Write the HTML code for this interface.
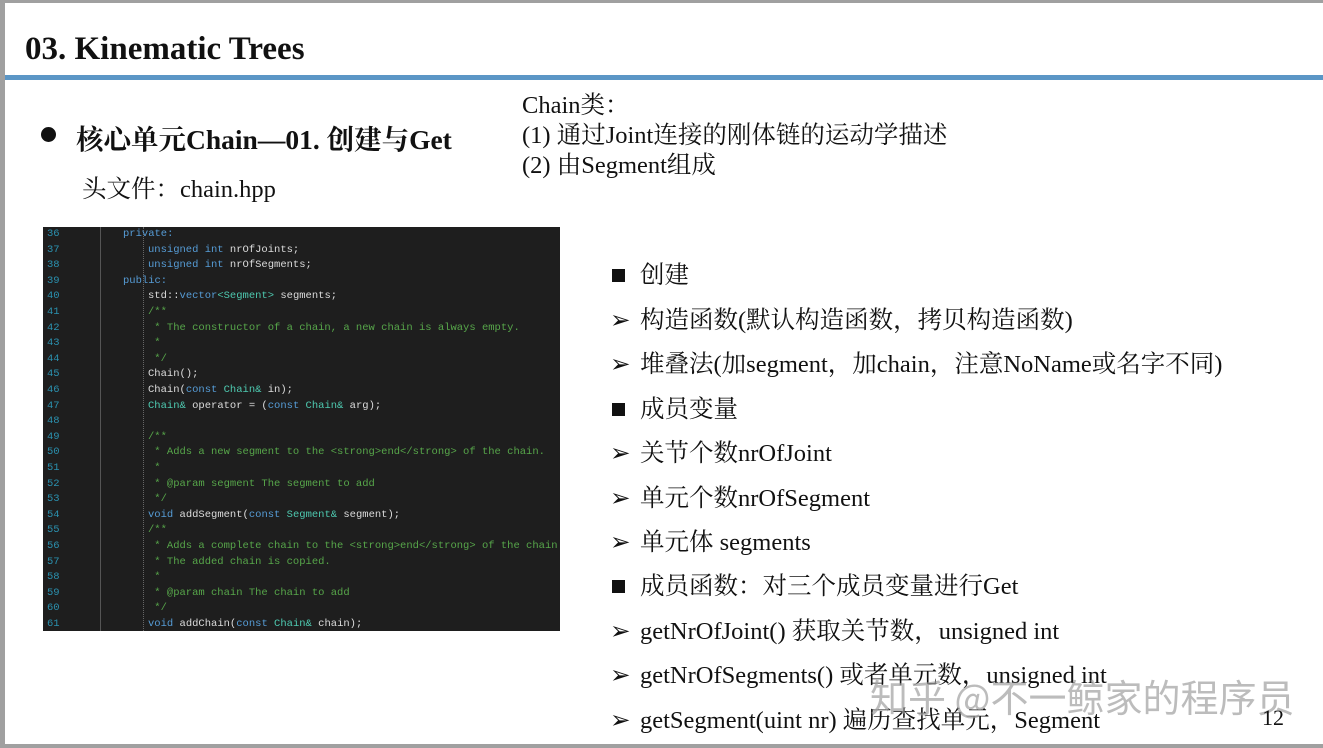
<!DOCTYPE html>
<html><head><meta charset="utf-8"><style>
body{margin:0;width:1323px;height:748px;overflow:hidden;background:#a0a0a0;position:relative;font-family:"Liberation Serif","Noto Serif CJK SC",serif;}
.page{position:absolute;left:5px;top:3px;width:1318px;height:741px;background:#fff;}
.t{position:absolute;white-space:nowrap;color:#111;}
.code{position:absolute;left:43px;top:227px;width:517px;height:404px;background:#1e1e1e;font-family:"Liberation Mono",monospace;font-size:10.5px;overflow:hidden;}
.code div{position:absolute;white-space:pre;height:15.6px;line-height:15.6px;}
.n{color:#2b91af;left:4px}
.k{color:#569cd6}.c{color:#57a64a}.ty{color:#4ec9b0}.w{color:#dcdcdc}
.r{position:absolute;font-size:24.5px;left:610px;white-space:nowrap;color:#111;font-family:"Liberation Serif","Noto Serif CJK SC",serif}
.r b{display:inline-block;width:30px;font-weight:normal}
.sq{display:inline-block;width:13px;height:13px;background:#111;margin:0 15px 3px 2px;vertical-align:middle}
</style></head><body>
<div class="page"></div>
<div class="t" style="left:25px;top:31px;font-size:33px;font-weight:bold">03. Kinematic Trees</div>
<div style="position:absolute;left:5px;top:75px;width:1318px;height:5px;background:#5b96c6"></div>
<div style="position:absolute;left:41px;top:127px;width:15px;height:15px;border-radius:50%;background:#111"></div>
<div class="t" style="left:76px;top:117px;font-size:27.5px;font-weight:bold">核心单元Chain—01. 创建与Get</div>
<div class="t" style="left:82px;top:170px;font-size:24.5px">头文件：chain.hpp</div>
<div class="t" style="left:522px;top:91px;font-size:24.5px;line-height:30px">Chain类：<br>(1) 通过Joint连接的刚体链的运动学描述<br>(2) 由Segment组成</div>
<div class="code">
<div style="left:57px;top:0;height:404px;border-left:1px solid #555"></div>
<div style="left:100px;top:0;height:404px;border-left:1px dotted #666"></div>
<div class="n" style="top:0">36</div><div class="k" style="left:80px;top:0">private:</div>
<div class="n" style="top:15.6px">37</div><div style="left:105px;top:15.6px"><span class="k">unsigned int</span><span class="w"> nrOfJoints;</span></div>
<div class="n" style="top:31.2px">38</div><div style="left:105px;top:31.2px"><span class="k">unsigned int</span><span class="w"> nrOfSegments;</span></div>
<div class="n" style="top:46.8px">39</div><div class="k" style="left:80px;top:46.8px">public:</div>
<div class="n" style="top:62.4px">40</div><div style="left:105px;top:62.4px"><span class="w">std::</span><span class="k">vector</span><span class="ty">&lt;Segment&gt;</span><span class="w"> segments;</span></div>
<div class="n" style="top:78px">41</div><div class="c" style="left:105px;top:78px">/**</div>
<div class="n" style="top:93.6px">42</div><div class="c" style="left:105px;top:93.6px"> * The constructor of a chain, a new chain is always empty.</div>
<div class="n" style="top:109.2px">43</div><div class="c" style="left:105px;top:109.2px"> *</div>
<div class="n" style="top:124.8px">44</div><div class="c" style="left:105px;top:124.8px"> */</div>
<div class="n" style="top:140.4px">45</div><div class="w" style="left:105px;top:140.4px">Chain();</div>
<div class="n" style="top:156px">46</div><div style="left:105px;top:156px"><span class="w">Chain(</span><span class="k">const</span><span class="ty"> Chain&amp;</span><span class="w"> in);</span></div>
<div class="n" style="top:171.6px">47</div><div style="left:105px;top:171.6px"><span class="ty">Chain&amp;</span><span class="w"> operator = (</span><span class="k">const</span><span class="ty"> Chain&amp;</span><span class="w"> arg);</span></div>
<div class="n" style="top:187.2px">48</div>
<div class="n" style="top:202.8px">49</div><div class="c" style="left:105px;top:202.8px">/**</div>
<div class="n" style="top:218.4px">50</div><div class="c" style="left:105px;top:218.4px"> * Adds a new segment to the &lt;strong&gt;end&lt;/strong&gt; of the chain.</div>
<div class="n" style="top:234px">51</div><div class="c" style="left:105px;top:234px"> *</div>
<div class="n" style="top:249.6px">52</div><div class="c" style="left:105px;top:249.6px"> * @param segment The segment to add</div>
<div class="n" style="top:265.2px">53</div><div class="c" style="left:105px;top:265.2px"> */</div>
<div class="n" style="top:280.8px">54</div><div style="left:105px;top:280.8px"><span class="k">void</span><span class="w"> addSegment(</span><span class="k">const</span><span class="ty"> Segment&amp;</span><span class="w"> segment);</span></div>
<div class="n" style="top:296.4px">55</div><div class="c" style="left:105px;top:296.4px">/**</div>
<div class="n" style="top:312px">56</div><div class="c" style="left:105px;top:312px"> * Adds a complete chain to the &lt;strong&gt;end&lt;/strong&gt; of the chain</div>
<div class="n" style="top:327.6px">57</div><div class="c" style="left:105px;top:327.6px"> * The added chain is copied.</div>
<div class="n" style="top:343.2px">58</div><div class="c" style="left:105px;top:343.2px"> *</div>
<div class="n" style="top:358.8px">59</div><div class="c" style="left:105px;top:358.8px"> * @param chain The chain to add</div>
<div class="n" style="top:374.4px">60</div><div class="c" style="left:105px;top:374.4px"> */</div>
<div class="n" style="top:390px">61</div><div style="left:105px;top:390px"><span class="k">void</span><span class="w"> addChain(</span><span class="k">const</span><span class="ty"> Chain&amp;</span><span class="w"> chain);</span></div>
</div>
<div class="r" style="top:256px"><span class="sq"></span>创建</div>
<div class="r" style="top:301px"><b>➢</b>构造函数(默认构造函数，拷贝构造函数)</div>
<div class="r" style="top:345px"><b>➢</b>堆叠法(加segment，加chain，注意NoName或名字不同)</div>
<div class="r" style="top:390px"><span class="sq"></span>成员变量</div>
<div class="r" style="top:434px"><b>➢</b>关节个数nrOfJoint</div>
<div class="r" style="top:479px"><b>➢</b>单元个数nrOfSegment</div>
<div class="r" style="top:523px"><b>➢</b>单元体 segments</div>
<div class="r" style="top:567px"><span class="sq"></span>成员函数：对三个成员变量进行Get</div>
<div class="r" style="top:612px"><b>➢</b>getNrOfJoint() 获取关节数，unsigned int</div>
<div class="r" style="top:656px"><b>➢</b>getNrOfSegments() 或者单元数，unsigned int</div>
<div class="r" style="top:701px"><b>➢</b>getSegment(uint nr) 遍历查找单元，Segment</div>
<div class="t" style="left:870px;top:668px;font-size:38px;color:rgba(160,160,160,0.7);font-family:'Noto Sans CJK SC',sans-serif">知乎 @不一鲸家的程序员</div>
<div class="t" style="left:1262px;top:705px;font-size:22px">12</div>
</body></html>
